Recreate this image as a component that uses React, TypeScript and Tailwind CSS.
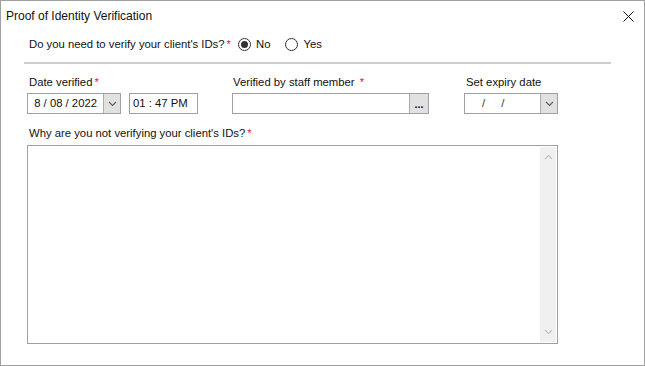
import React from "react";

const font = { fontFamily: '"Liberation Sans", Arial, sans-serif' };

function Chevron({ className = "" }: { className?: string }) {
  return (
    <svg width="9" height="6" viewBox="0 0 9 6" className={className}>
      <path d="M1 1 L4.5 4.5 L8 1" fill="none" stroke="currentColor" strokeWidth="1.2" />
    </svg>
  );
}

function DropButton() {
  return (
    <div className="w-[17px] h-full bg-[#e1e1e1] border-l border-[#adadad] flex items-center justify-center text-[#606060]">
      <Chevron />
    </div>
  );
}

function Radio({ checked, label }: { checked?: boolean; label: string }) {
  return (
    <div className="flex items-center gap-[5px]">
      <div className="w-[13px] h-[13px] rounded-full border border-[#333] flex items-center justify-center bg-white">
        {checked && <div className="w-[7px] h-[7px] rounded-full bg-[#333]" />}
      </div>
      <span>{label}</span>
    </div>
  );
}

const Req = () => <span className="text-[#e8174a] ml-[2px]">*</span>;

export default function App() {
  return (
    <div
      style={font}
      className="w-[645px] h-[366px] bg-white border border-[#a0a0a0] text-[11.3px] text-[#111] flex flex-col"
    >
      {/* title bar */}
      <div className="h-[30px] flex items-center justify-between pl-[5px] pr-[10px]">
        <span className="text-[12px]">Proof of Identity Verification</span>
        <svg width="11" height="11" viewBox="0 0 11 11">
          <path d="M0.5 0.5 L10.5 10.5 M10.5 0.5 L0.5 10.5" stroke="#111" strokeWidth="1" />
        </svg>
      </div>

      {/* question */}
      <div className="h-[20px] mt-[3px] flex items-center pl-[28px]">
        <span>
          Do you need to verify your client's IDs?<Req />
        </span>
        <div className="ml-[7px] flex items-center gap-[15px]">
          <Radio checked label="No" />
          <Radio label="Yes" />
        </div>
      </div>

      <div className="mt-[8px] ml-[23px] w-[587px] h-[2px] bg-[#cfcfcf]" />

      {/* labels */}
      <div className="mt-[10px] h-[16px] flex items-center">
        <div className="w-[231px] pl-[28px]">
          Date verified<Req />
        </div>
        <div className="w-[233px] pl-[1px]">
          Verified by staff member <Req />
        </div>
        <div className="pl-[1px]">Set expiry date</div>
      </div>

      {/* inputs */}
      <div className="mt-[3px] h-[21px] flex pl-[26px]">
        <div className="w-[94px] h-full border border-[#a0a0a0] flex">
          <div className="flex-1 flex items-center justify-end pr-[6px]">8 / 08 / 2022</div>
          <DropButton />
        </div>
        <div className="ml-[8px] w-[69px] h-full border border-[#a0a0a0] flex items-center pl-[3px]">
          01 : 47 PM
        </div>
        <div className="ml-[34px] w-[197px] h-full border border-[#a0a0a0] flex justify-end">
          <div className="w-[19px] h-full bg-[#e1e1e1] border-l border-[#adadad] flex items-end justify-center pb-[3px] font-bold text-[11px] leading-none">
            ...
          </div>
        </div>
        <div className="ml-[35px] w-[94px] h-full border border-[#a0a0a0] flex">
          <div className="flex-1 flex items-center pl-[17px] gap-[16px] text-[#333]">
            <span>/</span>
            <span>/</span>
          </div>
          <DropButton />
        </div>
      </div>

      <div className="mt-[11px] h-[16px] flex items-center pl-[28px]">
        Why are you not verifying your client's IDs?<Req />
      </div>

      <div className="mt-[4px] ml-[26px] w-[531px] h-[199px] border border-[#a0a0a0] flex justify-end p-[1px]">
        <div className="w-[16px] h-full bg-[#f0f0f0] flex flex-col items-center justify-between py-[7px] text-[#c2c2c2]">
          <Chevron className="rotate-180" />
          <Chevron />
        </div>
      </div>
    </div>
  );
}
